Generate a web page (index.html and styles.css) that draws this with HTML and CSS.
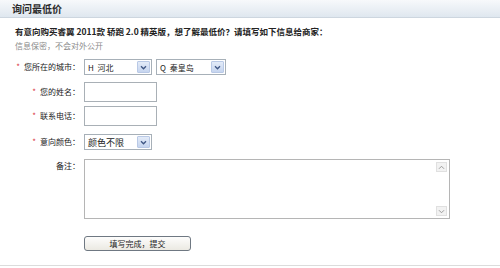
FILE: index.html
```html
<!DOCTYPE html>
<html lang="zh">
<head>
<meta charset="utf-8">
<title>询问最低价</title>
<link rel="stylesheet" href="styles.css">
</head>
<body>
<div class="panel">
  <div class="header">询问最低价</div>
  <div class="intro">
    <p class="lead">有意向购买睿翼 2011款 轿跑 2.0 精英版，想了解最低价？请填写如下信息给商家：</p>
    <p class="note">信息保密，不会对外公开</p>
  </div>
  <form class="form">
    <div class="row row-city">
      <div class="label"><span class="req">*</span>您所在的城市：</div>
      <div class="select sel-prov"><span class="sel-text">H&nbsp;河北</span><span class="sel-btn"><svg viewBox="0 0 8 6" width="7" height="5"><path d="M1 1.5 L4 4.5 L7 1.5" fill="none" stroke="#3f5683" stroke-width="1.6"/></svg></span></div>
      <div class="select sel-city"><span class="sel-text">Q&nbsp;秦皇岛</span><span class="sel-btn"><svg viewBox="0 0 8 6" width="7" height="5"><path d="M1 1.5 L4 4.5 L7 1.5" fill="none" stroke="#3f5683" stroke-width="1.6"/></svg></span></div>
    </div>
    <div class="row row-name">
      <div class="label"><span class="req">*</span>您的姓名：</div>
      <div class="input"></div>
    </div>
    <div class="row row-phone">
      <div class="label"><span class="req">*</span>联系电话：</div>
      <div class="input"></div>
    </div>
    <div class="row row-color">
      <div class="label"><span class="req">*</span>意向颜色：</div>
      <div class="select sel-color"><span class="sel-text big">颜色不限</span><span class="sel-btn"><svg viewBox="0 0 8 6" width="7" height="5"><path d="M1 1.5 L4 4.5 L7 1.5" fill="none" stroke="#3f5683" stroke-width="1.6"/></svg></span></div>
    </div>
    <div class="row row-memo">
      <div class="label">备注：</div>
      <div class="textarea">
        <div class="ta-body"></div>
        <div class="ta-scroll">
          <span class="ta-arrow"><svg viewBox="0 0 8 6" width="7" height="5"><path d="M1 4.5 L4 1.5 L7 4.5" fill="none" stroke="#9a9a9a" stroke-width="1.2"/></svg></span>
          <span class="ta-arrow"><svg viewBox="0 0 8 6" width="7" height="5"><path d="M1 1.5 L4 4.5 L7 1.5" fill="none" stroke="#9a9a9a" stroke-width="1.2"/></svg></span>
        </div>
      </div>
    </div>
    <div class="row row-submit">
      <div class="label"></div>
      <button type="button" class="submit">填写完成，提交</button>
    </div>
  </form>
  <div class="footer-line"></div>
</div>
</body>
</html>
```

FILE: styles.css
```css
html, body {
  margin: 0;
  padding: 0;
  background: #ffffff;
}
body {
  font-family: "Noto Sans CJK SC", "DejaVu Sans", sans-serif;
  color: #333333;
  width: 500px;
  height: 268px;
  overflow: hidden;
}
.header {
  height: 17px;
  line-height: 17px;
  padding-left: 12px;
  font-size: 10px;
  font-weight: bold;
  color: #2b2b2b;
  background: linear-gradient(#f7f9fb, #dfe7ef);
  border-bottom: 1px solid #cdd6df;
}
.intro {
  padding-left: 15px;
}
.intro p {
  margin: 0;
  font-size: 8px;
  line-height: 12px;
}
.intro p.lead {
  margin-top: 7px;
  font-size: 8.5px;
  font-weight: bold;
  color: #222222;
}
.intro p.note {
  margin-top: 3px;
  color: #8a8a8a;
}
.form {
  margin: 7px 0 0 0;
  display: flex;
  flex-direction: column;
}
.row {
  display: flex;
  align-items: center;
}
.label {
  width: 80px;
  margin-right: 4px;
  text-align: right;
  font-size: 8px;
  line-height: 10px;
  color: #222222;
  white-space: nowrap;
}
.req {
  color: #d9363e;
  margin-right: 4px;
  font-size: 8px;
}
.row-city { height: 16px; }
.row-name { margin-top: 7px; height: 20px; }
.row-phone { margin-top: 4px; height: 20px; }
.row-color { margin-top: 8px; height: 16px; }
.row-memo { margin-top: 9px; align-items: flex-start; }
.row-memo .label { margin-top: 2px; }
.row-submit { margin-top: 17px; height: 15px; }

.select {
  box-sizing: border-box;
  height: 16px;
  border: 1px solid #a7b0b8;
  display: flex;
  align-items: center;
  background: #ffffff;
}
.sel-prov { width: 68px; }
.sel-city { width: 70px; margin-left: 4px; }
.sel-color { width: 68px; }
.sel-text {
  flex: 1;
  padding-left: 3px;
  font-size: 8px;
  color: #222222;
  white-space: nowrap;
  word-spacing: 2px;
}
.sel-text.big { font-size: 9px; }
.sel-btn {
  box-sizing: border-box;
  width: 13px;
  height: 12px;
  margin-right: 1px;
  display: flex;
  align-items: center;
  justify-content: center;
  background: linear-gradient(#e3ebf8, #c6d5ef);
  border: 1px solid #b9c9e6;
  border-radius: 1px;
}
.input {
  box-sizing: border-box;
  width: 73px;
  height: 20px;
  border: 1px solid #a9b0b6;
  background: #ffffff;
}
.textarea {
  box-sizing: border-box;
  width: 366px;
  height: 60px;
  border: 1px solid #b5b5b5;
  display: flex;
  background: #ffffff;
}
.ta-body { flex: 1; }
.ta-scroll {
  width: 12px;
  display: flex;
  flex-direction: column;
  justify-content: space-between;
  padding: 2px 1px 2px 0;
}
.ta-arrow {
  width: 11px;
  height: 10px;
  display: flex;
  align-items: center;
  justify-content: center;
  background: #f2f2f2;
  border: 1px solid #e0e0e0;
  box-sizing: border-box;
}
.submit {
  box-sizing: border-box;
  width: 107px;
  height: 15px;
  padding: 0;
  border: 1px solid #6f7882;
  border-radius: 3px;
  background: linear-gradient(#fdfdfc, #ebe9e2);
  font-family: "Noto Sans CJK SC", sans-serif;
  font-size: 8px;
  line-height: 13px;
  color: #222222;
}
.footer-line {
  margin-top: 14px;
  border-top: 1px solid #dcdcdc;
}
```
